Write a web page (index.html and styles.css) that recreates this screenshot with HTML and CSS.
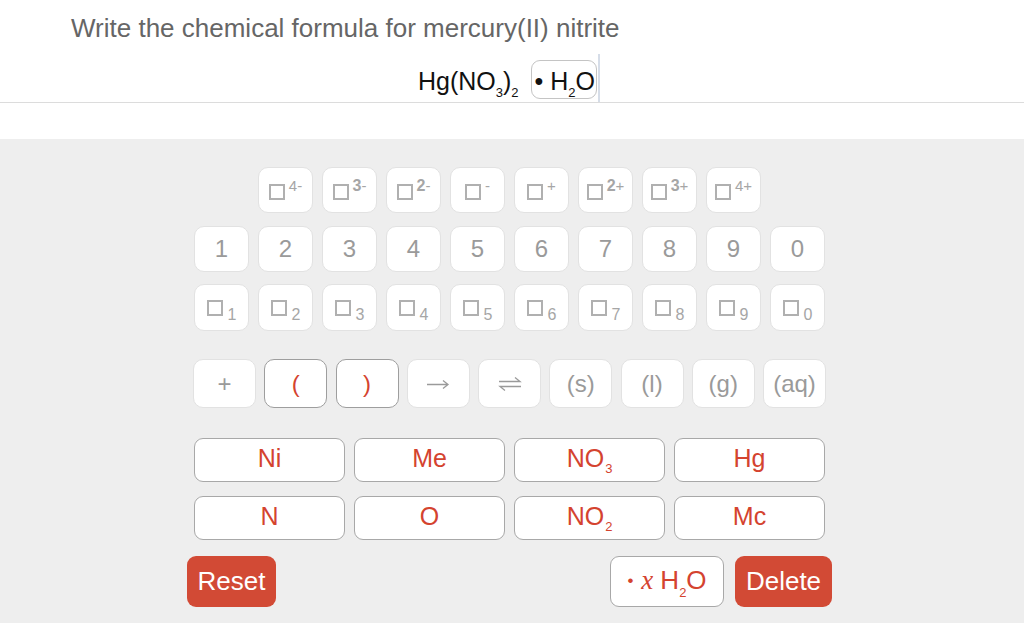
FILE: index.html
```html
<!DOCTYPE html>
<html>
<head>
<meta charset="utf-8">
<link rel="stylesheet" href="styles.css">
</head>
<body>
<div class="top">
  <div class="title">Write the chemical formula for mercury(II) nitrite</div>
  <div class="formula-row">
    <div class="formula">Hg(NO<sub>3</sub>)<sub>2</sub><span class="hydrate">• H<sub>2</sub>O</span></div>
    <div class="cursor"></div>
  </div>
</div>
<div class="panel">
  <div class="keypad">
    <div class="row row-charge">
      <div class="key"><span class="sq"></span><span class="sup">4-</span></div>
      <div class="key"><span class="sq"></span><span class="sup"><b>3</b>-</span></div>
      <div class="key"><span class="sq"></span><span class="sup"><b>2</b>-</span></div>
      <div class="key"><span class="sq"></span><span class="sup">-</span></div>
      <div class="key"><span class="sq"></span><span class="sup">+</span></div>
      <div class="key"><span class="sq"></span><span class="sup"><b>2</b>+</span></div>
      <div class="key"><span class="sq"></span><span class="sup"><b>3</b>+</span></div>
      <div class="key"><span class="sq"></span><span class="sup">4+</span></div>
    </div>
    <div class="row row-num">
      <div class="key num">1</div>
      <div class="key num">2</div>
      <div class="key num">3</div>
      <div class="key num">4</div>
      <div class="key num">5</div>
      <div class="key num">6</div>
      <div class="key num">7</div>
      <div class="key num">8</div>
      <div class="key num">9</div>
      <div class="key num">0</div>
    </div>
    <div class="row row-sub">
      <div class="key subkey"><span class="sq"></span><span class="subn">1</span></div>
      <div class="key subkey"><span class="sq"></span><span class="subn">2</span></div>
      <div class="key subkey"><span class="sq"></span><span class="subn">3</span></div>
      <div class="key subkey"><span class="sq"></span><span class="subn">4</span></div>
      <div class="key subkey"><span class="sq"></span><span class="subn">5</span></div>
      <div class="key subkey"><span class="sq"></span><span class="subn">6</span></div>
      <div class="key subkey"><span class="sq"></span><span class="subn">7</span></div>
      <div class="key subkey"><span class="sq"></span><span class="subn">8</span></div>
      <div class="key subkey"><span class="sq"></span><span class="subn">9</span></div>
      <div class="key subkey"><span class="sq"></span><span class="subn">0</span></div>
    </div>
    <div class="row row-state">
      <div class="key state">+</div>
      <div class="key state paren">(</div>
      <div class="key state paren">)</div>
      <div class="key state"><svg class="arrow" width="24" height="12" viewBox="0 0 24 12"><path d="M1 6.5 H22 M17 2.5 L22 6.5 L17 10.5" fill="none" stroke="#9a9a9a" stroke-width="1.3"/></svg></div>
      <div class="key state"><svg class="arrow" width="24" height="16" viewBox="0 0 24 16"><path d="M1 5.5 H22 L17 1.5 M23 10.5 H2 L7 14.5" fill="none" stroke="#9a9a9a" stroke-width="1.3"/></svg></div>
      <div class="key state">(s)</div>
      <div class="key state">(l)</div>
      <div class="key state">(g)</div>
      <div class="key state">(aq)</div>
    </div>
    <div class="row row-el first">
      <div class="key el">Ni</div>
      <div class="key el">Me</div>
      <div class="key el">NO<span class="elsub">3</span></div>
      <div class="key el">Hg</div>
    </div>
    <div class="row row-el">
      <div class="key el">N</div>
      <div class="key el">O</div>
      <div class="key el">NO<span class="elsub">2</span></div>
      <div class="key el">Mc</div>
    </div>
    <div class="row row-bottom">
      <div class="btn btn-red btn-reset">Reset</div>
      <div class="spacer"></div>
      <div class="btn btn-water"><span class="dot">•</span><span class="x">x</span>H<span class="elsub">2</span>O</div>
      <div class="btn btn-red btn-delete">Delete</div>
    </div>
  </div>
</div>
</body>
</html>
```
FILE: styles.css
```css
html, body {
  margin: 0;
  padding: 0;
  background: #fff;
  font-family: "Liberation Sans", Arial, sans-serif;
}
.top {
  height: 103px;
  border-bottom: 1px solid #dcdcdc;
  box-sizing: border-box;
}
.title {
  padding: 13px 0 0 71px;
  font-size: 26px;
  line-height: 30px;
  color: #666;
}
.formula-row {
  display: flex;
  justify-content: center;
  height: 49px;
  margin-top: 11px;
  padding-right: 6px;
}
.formula {
  font-size: 25px;
  line-height: 25px;
  color: #111;
  padding-top: 6px;
  white-space: nowrap;
}
.formula sub {
  font-size: 13px;
  line-height: 0;
  vertical-align: -7px;
}
.hydrate {
  display: inline-block;
  border: 1px solid #c4c4c4;
  border-radius: 9px;
  padding: 3px 1px 0 3px;
  line-height: 34px;
  height: 34px;
  margin-left: 12px;
}
.cursor {
  width: 2px;
  height: 48px;
  background: #d6dde8;
  margin-left: 1px;
}
.panel {
  margin-top: 36px;
  background: #eeeeee;
  height: 484px;
  padding-top: 28px;
  box-sizing: border-box;
}
.keypad {
  margin-left: 193px;
  width: 633px;
}
.row {
  display: flex;
  justify-content: center;
  gap: 9px;
}
.key {
  background: #fff;
  border: 1px solid #e2e2e2;
  border-radius: 10px;
  box-sizing: border-box;
  width: 55px;
  height: 46px;
  display: flex;
  align-items: center;
  justify-content: center;
  color: #9a9a9a;
}
.sq {
  display: inline-block;
  width: 16px;
  height: 16px;
  border: 2px solid #b0b0b0;
  box-sizing: border-box;
}
.sup {
  font-size: 15px;
  align-self: flex-start;
  margin-top: 9px;
  margin-left: 4px;
  color: #a6a6a6;
}
.sup b {
  font-size: 16px;
}
.row-charge .key .sq {
  margin-top: 4px;
}
.row-num {
  margin-top: 13px;
}
.num {
  font-size: 24px;
}
.row-sub {
  margin-top: 12px;
}
.subkey {
  height: 47px;
}
.subkey .sq {
  margin-top: 1px;
}
.subn {
  font-size: 16px;
  margin-left: 5px;
  margin-top: 15px;
  color: #a6a6a6;
}
.row-state {
  margin-top: 28px;
  gap: 8.25px;
}
.state {
  width: 63px;
  height: 49px;
  font-size: 24px;
}
.state.paren {
  border: 1px solid #9e9e9e;
  color: #d4432f;
}
.arrow {
  display: block;
}
.row-el {
  margin-top: 14px;
}
.row-el.first {
  margin-top: 30px;
}
.el {
  width: 151px;
  height: 44px;
  border: 1px solid #a8a8a8;
  border-radius: 9px;
  font-size: 25px;
  color: #d4432f;
  padding-bottom: 4px;
}
.elsub {
  font-size: 13px;
  align-self: flex-end;
  margin-bottom: -2px;
}
.el .elsub {
  margin-bottom: 1px;
  margin-left: 1px;
}
.row-bottom {
  margin: 16px -6px 0 -6px;
  gap: 11px;
  justify-content: flex-start;
}
.spacer {
  flex: 1;
}
.btn {
  height: 51px;
  border-radius: 9px;
  box-sizing: border-box;
  display: flex;
  align-items: center;
  justify-content: center;
  font-size: 26px;
}
.btn-red {
  background: #d24a35;
  color: #fff;
}
.btn-reset {
  width: 89px;
}
.btn-delete {
  width: 97px;
}
.btn-water {
  width: 114px;
  background: #fff;
  border: 1px solid #a8a8a8;
  color: #d4432f;
  padding-bottom: 2px;
}
.btn-water .elsub {
  margin-bottom: 4px;
}
.dot {
  font-size: 17px;
  margin-right: 8px;
}
.x {
  font-family: "Liberation Serif", "Times New Roman", serif;
  font-style: italic;
  font-size: 27px;
  margin-right: 7px;
}
```
